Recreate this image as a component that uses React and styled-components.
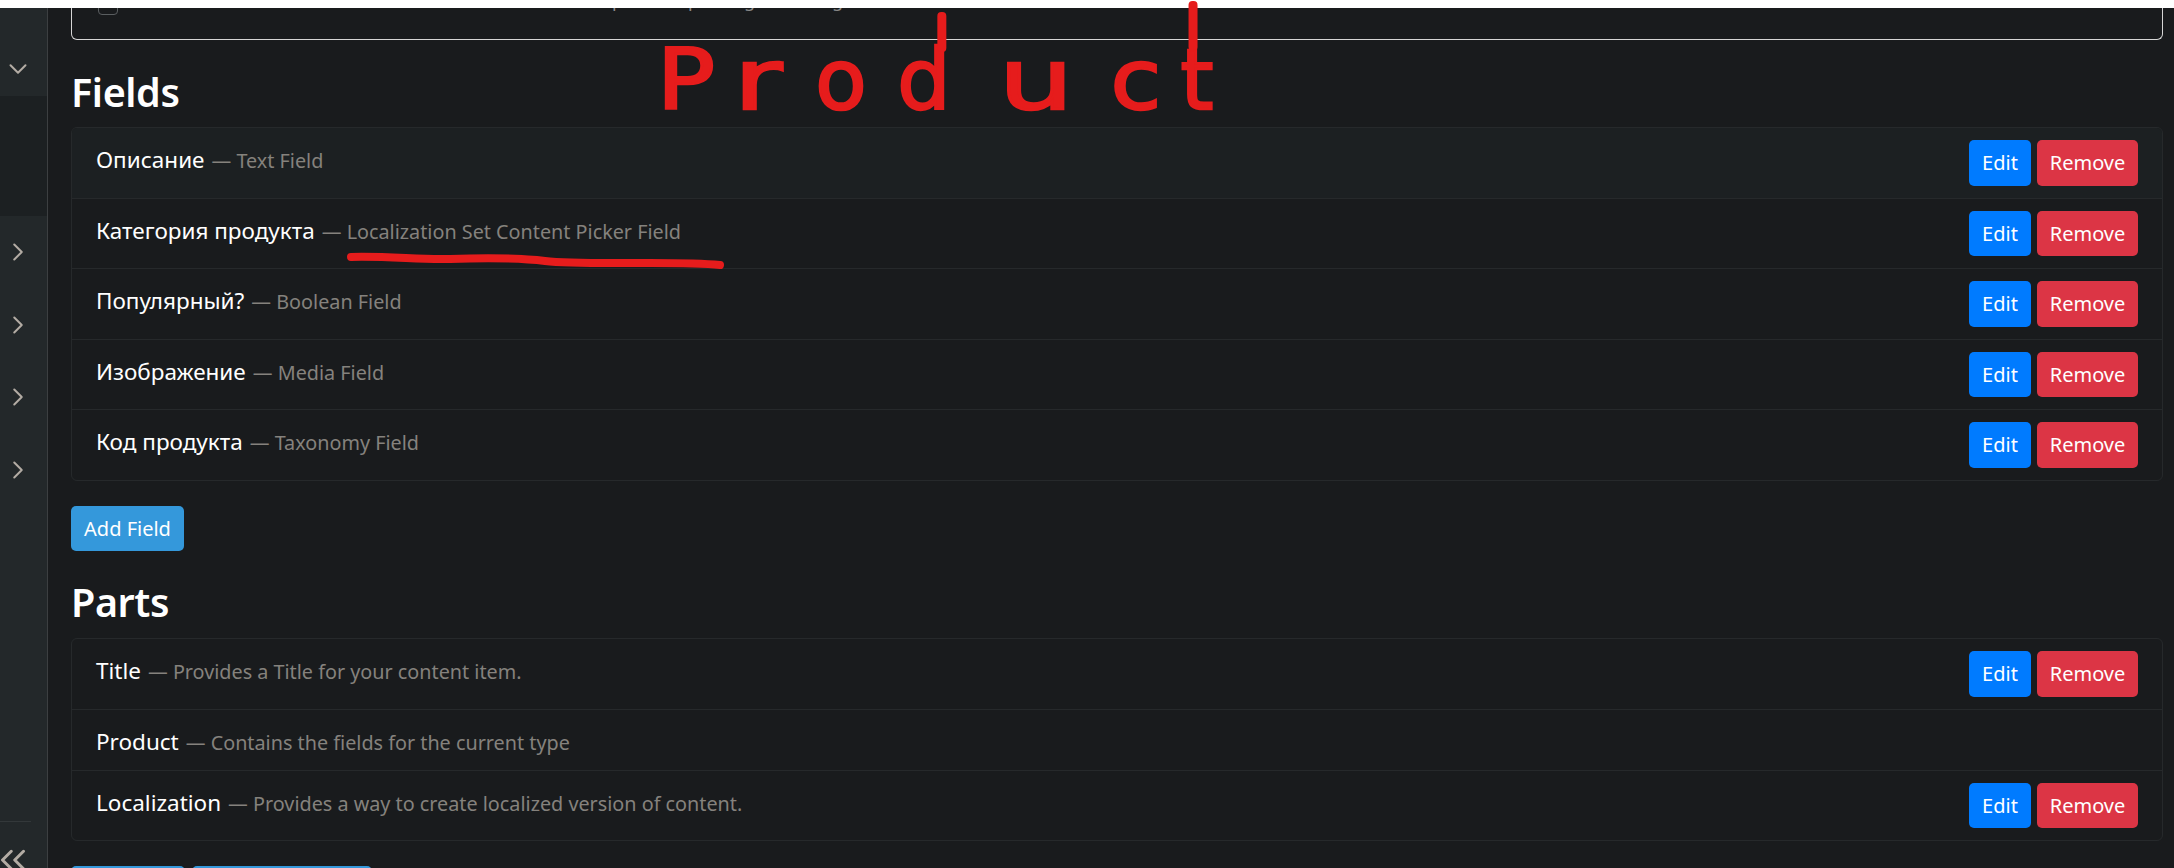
import React from "react";
import styled, { createGlobalStyle } from "styled-components";
import { ChevronDown, ChevronRight, ChevronsLeft } from "lucide-react";

const GlobalStyle = createGlobalStyle`
  html, body {
    margin: 0;
    padding: 0;
    background: #ffffff;
  }
  * {
    box-sizing: border-box;
  }
`;

const Page = styled.div`
  position: relative;
  width: 2174px;
  height: 868px;
  overflow: hidden;
  display: flex;
  flex-direction: column;
  font-family: "Noto Sans", "Open Sans", sans-serif;
  font-size: 20px;
  color: #ffffff;
`;
const TopStrip = styled.div`
  flex: 0 0 8px;
  background: #ffffff;
`;
const Body = styled.div`
  flex: 1;
  display: flex;
  min-height: 0;
  background: #191b1d;
`;

const Sidebar = styled.div`
  flex: 0 0 48px;
  display: flex;
  flex-direction: column;
  background: #23282a;
  border-right: 1px solid #3c3f41;
  color: #b3aca4;
`;
const SideItem = styled.div`
  height: ${(p) => p.$h}px;
  display: flex;
  padding-top: ${(p) => p.$pad}px;
  padding-left: 3px;
  background: ${(p) => (p.$dark ? "#1c2022" : "transparent")};
`;
const SideSpacer = styled.div`
  flex: 1;
`;
const SideFoot = styled.div`
  flex: 0 0 47px;
  min-height: 0;
  height: 47px;
  width: 31px;
  padding-top: 17px;
  border-top: 1px solid #33383a;
  svg {
    display: block;
    margin-left: -8px;
  }
`;

const Main = styled.div`
  flex: 1;
  min-width: 0;
  padding: 0 11px 0 23px;
`;
const CutCard = styled.div`
  height: 32px;
  overflow: hidden;
  border: 1px solid #d6d6d6;
  border-top: none;
  border-radius: 0 0 6px 6px;
  display: flex;
  align-items: flex-start;
`;
const CutCheck = styled.div`
  flex: 0 0 auto;
  width: 20px;
  height: 20px;
  margin: -13px 0 0 26px;
  border: 1px solid #5a5e60;
  border-radius: 4px;
`;
const CutText = styled.div`
  display: flex;
  margin-top: -20px;
  margin-left: ${(p) => p.$left}px;
  line-height: 25px;
  font-size: 18px;
  color: #8a8a8a;
`;
const CutLetter = styled.span`
  width: ${(p) => p.$w}px;
`;

const Heading = styled.h2`
  margin: ${(p) => p.$top}px 0 ${(p) => p.$bottom}px;
  font-size: 39.5px;
  line-height: 48px;
  font-weight: 600;
  letter-spacing: -0.4px;
`;
const List = styled.div`
  border: 1px solid #26292b;
  border-radius: 6px;
  overflow: hidden;
`;
const Row = styled.div`
  display: flex;
  justify-content: space-between;
  align-items: flex-start;
  padding: 15px 24px;
  line-height: 30px;
  background: ${(p) => (p.$lit ? "#1c2022" : "transparent")};
  border-top: ${(p) => (p.$first ? "none" : "1px solid #26292b")};
`;
const RowText = styled.div`
  height: 30px;
  position: relative;
  top: 2px;
  white-space: nowrap;
`;
const Name = styled.span`
  font-size: 22.5px;
  color: #ffffff;
`;
const Hint = styled.span`
  margin-left: 7px;
  font-size: 19.8px;
  color: #85827d;
`;
const Actions = styled.div`
  display: flex;
  gap: 6px;
  margin: -3px 0;
`;
const Button = styled.button`
  height: 45.5px;
  min-width: ${(p) => p.$w}px;
  padding: 1px 0 0;
  border: none;
  border-radius: 5px;
  font: inherit;
  line-height: 1;
  color: #ffffff;
  background: ${(p) => p.$bg};
`;
const FootBar = styled.div`
  display: flex;
  gap: 7px;
  margin-top: 25px;
`;

const Annotation = styled.div`
  position: absolute;
  left: 0;
  top: 30px;
  font-family: "DejaVu Sans", sans-serif;
  font-size: 84px;
  line-height: 100px;
  color: #e61c1c;
  -webkit-text-stroke: 2.5px #e61c1c;
`;
const Letter = styled.span`
  position: absolute;
  left: ${(p) => p.$x}px;
  top: 0;
  transform: translateX(-50%) scaleX(${(p) => p.$sx || 1});
  &::before {
    content: "";
    display: ${(p) => (p.$stem ? "block" : "none")};
    position: absolute;
    left: ${(p) => p.$stemX}px;
    top: ${(p) => p.$stemTop}px;
    width: 9px;
    height: ${(p) => p.$stem}px;
    border-radius: 4px;
    background: #e61c1c;
  }
`;
const Underline = styled.svg`
  position: absolute;
  left: 340px;
  top: 245px;
`;

const fields = [
  ["Описание", "Text Field"],
  ["Категория продукта", "Localization Set Content Picker Field"],
  ["Популярный?", "Boolean Field"],
  ["Изображение", "Media Field"],
  ["Код продукта", "Taxonomy Field"],
];

const parts = [
  ["Title", "Provides a Title for your content item.", true],
  ["Product", "Contains the fields for the current type", false],
  ["Localization", "Provides a way to create localized version of content.", true],
];

const letters = [
  { c: "P", x: 686, sx: 1.15 },
  { c: "r", x: 758, sx: 1.4 },
  { c: "o", x: 841 },
  { c: "d", x: 924, stem: 40, stemX: 40, stemTop: -18 },
  { c: "u", x: 1036, sx: 1.4 },
  { c: "c", x: 1136, sx: 1.1 },
  { c: "t", x: 1197, stem: 50, stemX: 8, stemTop: -29 },
];

const ItemRow = ({ name, hint, buttons = true, first, lit }) => (
  <Row $first={first} $lit={lit}>
    <RowText>
      <Name>{name}</Name>
      <Hint>— {hint}</Hint>
    </RowText>
    {buttons && (
      <Actions>
        <Button $w={62} $bg="#007bff">Edit</Button>
        <Button $w={101} $bg="#dc3545">Remove</Button>
      </Actions>
    )}
  </Row>
);

export default function App() {
  return (
    <Page>
      <GlobalStyle />
      <TopStrip />
      <Body>
        <Sidebar>
          <SideItem $h={88} $pad={46}>
            <ChevronDown size={30} strokeWidth={1.6} />
          </SideItem>
          <SideItem $h={120} $dark />
          {[0, 1, 2, 3].map((i) => (
            <SideItem key={i} $h={72.5} $pad={21}>
              <ChevronRight size={30} strokeWidth={1.6} />
            </SideItem>
          ))}
          <SideSpacer />
          <SideFoot>
            <ChevronsLeft size={42} strokeWidth={1.7} />
          </SideFoot>
        </Sidebar>
        <Main>
          <CutCard>
            <CutCheck />
            <CutText $left={494}>
              <CutLetter $w={76}>p</CutLetter>
              <CutLetter $w={56}>p</CutLetter>
              <CutLetter $w={88}>g</CutLetter>
              <CutLetter $w={20}>g</CutLetter>
            </CutText>
          </CutCard>
          <Heading $top={28} $bottom={11}>Fields</Heading>
          <List>
            {fields.map(([name, hint], i) => (
              <ItemRow key={name} name={name} hint={hint} first={i === 0} lit={i === 0} />
            ))}
          </List>
          <FootBar>
            <Button $w={113} $bg="#3498db">Add Field</Button>
          </FootBar>
          <Heading $top={27} $bottom={12}>Parts</Heading>
          <List>
            {parts.map(([name, hint, buttons], i) => (
              <ItemRow key={name} name={name} hint={hint} buttons={buttons} first={i === 0} />
            ))}
          </List>
          <FootBar>
            <Button $w={114} $bg="#3498db">Add Parts</Button>
            <Button $w={180} $bg="#3498db">Add Custom Part</Button>
          </FootBar>
        </Main>
      </Body>
      <Annotation>
        {letters.map((l) => (
          <Letter key={l.c} $x={l.x} $sx={l.sx} $stem={l.stem} $stemX={l.stemX} $stemTop={l.stemTop}>
            {l.c}
          </Letter>
        ))}
      </Annotation>
      <Underline width="400" height="30" viewBox="0 0 400 30" fill="none">
        <path
          d="M11 12 C50 11 80 15 110 14 S180 13 205 16 S280 18 310 18 S360 18 380 20"
          stroke="#e61c1c"
          strokeWidth="8"
          strokeLinecap="round"
        />
      </Underline>
    </Page>
  );
}
